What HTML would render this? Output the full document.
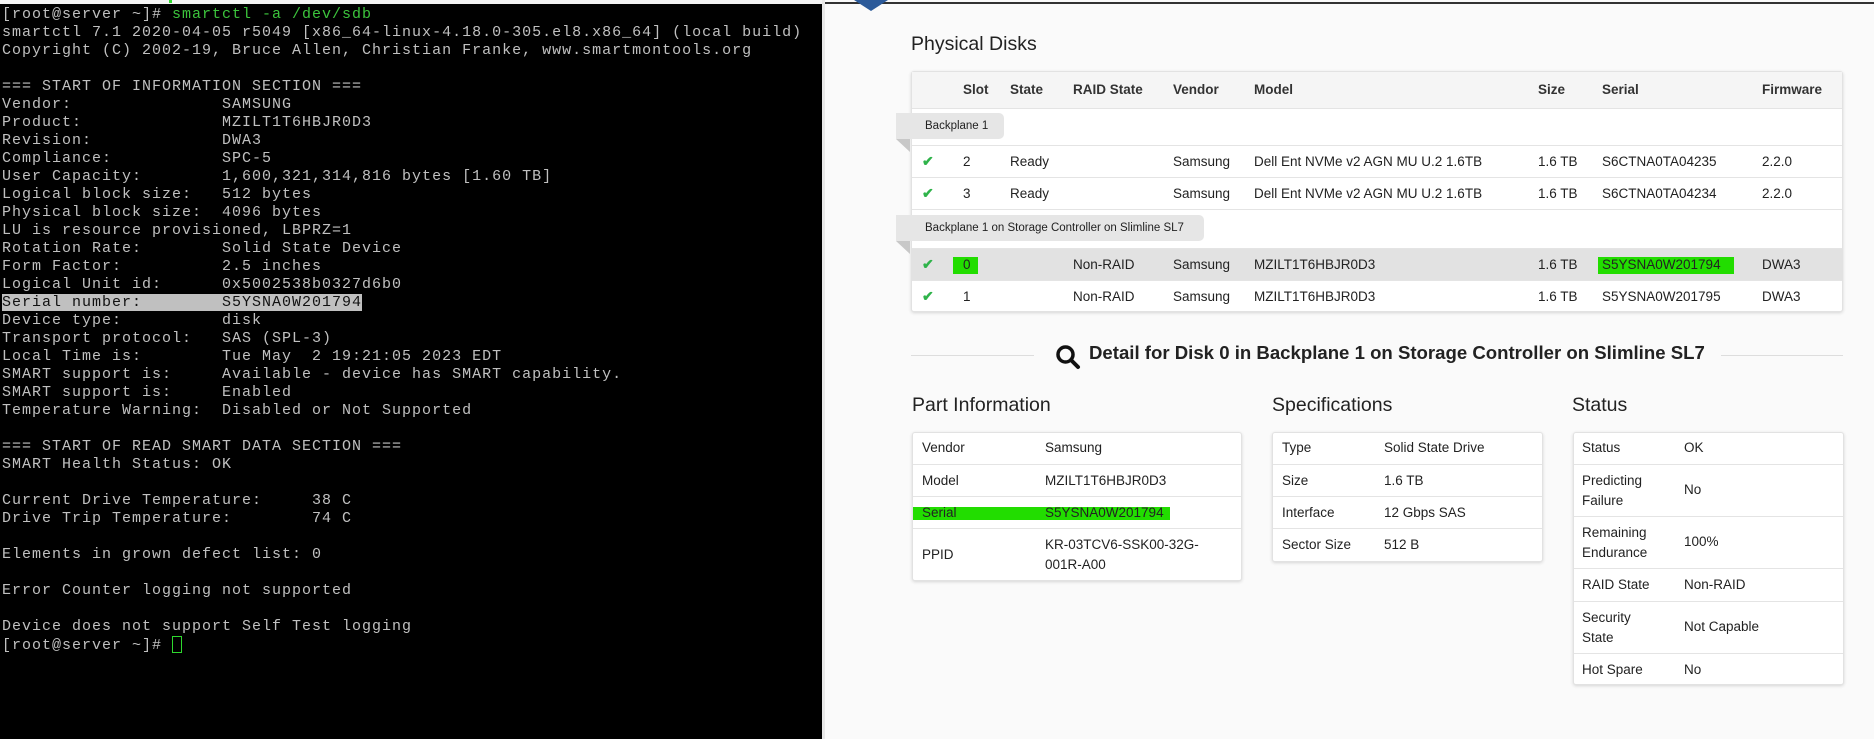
<!DOCTYPE html>
<html><head><meta charset="utf-8"><style>
*{margin:0;padding:0;box-sizing:border-box}
body{width:1874px;height:739px;overflow:hidden;background:#fafafa;position:relative;font-family:"Liberation Sans",sans-serif;color:#222}
#term{position:absolute;left:0;top:4px;width:822px;height:735px;background:#000}
#termtop{position:absolute;left:0;top:0;width:822px;height:4px;background:#f4f4f4}
#sep{position:absolute;left:822px;top:0;width:3px;height:739px;background:#e8e8e8}
pre{position:absolute;left:2px;top:6px;font-family:"Liberation Mono",monospace;font-size:15px;letter-spacing:1px;line-height:18px;color:#c0c0c0}
.g{color:#3cc43c}
.hl{background:#c0c0c0;color:#111}
.cur{display:inline-block;width:10px;height:17px;border:1.5px solid #2ed82e;vertical-align:-4px}
.abs{position:absolute}
h2{position:absolute;font-size:19.5px;font-weight:normal;color:#222}
.box{position:absolute;background:#fff;border:1px solid #e2e2e2;box-shadow:0 1px 3px rgba(0,0,0,.15);border-radius:3px}
.row{position:absolute;left:0;right:0;border-top:1px solid #e4e4e4;font-size:13.5px}
.t{position:absolute;white-space:nowrap}
.badge{position:absolute;left:896px;height:26px;background:#e6e6e6;border-radius:0 5px 5px 0;font-size:11.5px;line-height:26px;padding-left:29px;color:#222}
.fold{position:absolute;left:896px;width:0;height:0;border-top:13px solid #c8c8c8;border-left:14px solid transparent}
.ck{position:absolute;color:#2fb34a;font-weight:bold;font-size:14px}
.green{position:absolute;background:#22dd00}
</style></head><body>
<div id="termtop"></div>
<div id="term"></div>
<div class="abs" style="left:169px;top:0;width:3px;height:3px;background:#2ed82e"></div>
<pre>[root@server ~]# <span class="g">smartctl -a /dev/sdb</span>
smartctl 7.1 2020-04-05 r5049 [x86_64-linux-4.18.0-305.el8.x86_64] (local build)
Copyright (C) 2002-19, Bruce Allen, Christian Franke, www.smartmontools.org

=== START OF INFORMATION SECTION ===
Vendor:               SAMSUNG
Product:              MZILT1T6HBJR0D3
Revision:             DWA3
Compliance:           SPC-5
User Capacity:        1,600,321,314,816 bytes [1.60 TB]
Logical block size:   512 bytes
Physical block size:  4096 bytes
LU is resource provisioned, LBPRZ=1
Rotation Rate:        Solid State Device
Form Factor:          2.5 inches
Logical Unit id:      0x5002538b0327d6b0
<span class="hl">Serial number:        S5YSNA0W201794</span>
Device type:          disk
Transport protocol:   SAS (SPL-3)
Local Time is:        Tue May  2 19:21:05 2023 EDT
SMART support is:     Available - device has SMART capability.
SMART support is:     Enabled
Temperature Warning:  Disabled or Not Supported

=== START OF READ SMART DATA SECTION ===
SMART Health Status: OK

Current Drive Temperature:     38 C
Drive Trip Temperature:        74 C

Elements in grown defect list: 0

Error Counter logging not supported

Device does not support Self Test logging
[root@server ~]# <span class="cur"></span></pre>
<div id="sep"></div>
<div class="abs" style="left:825px;top:2px;width:1049px;height:2px;background:#333"></div>
<div class="abs" style="left:854px;top:0;width:0;height:0;border-left:17px solid transparent;border-right:17px solid transparent;border-top:11px solid #2b5a9a"></div>

<h2 style="left:911px;top:33px">Physical Disks</h2>
<div class="box" style="left:911px;top:71px;width:932px;height:241px">
 <div class="row" style="top:0;height:36px;background:#f5f5f5;border-top:none;font-weight:bold;color:#333">
  <span class="t" style="left:51px;top:10px">Slot</span><span class="t" style="left:98px;top:10px">State</span><span class="t" style="left:161px;top:10px">RAID State</span><span class="t" style="left:261px;top:10px">Vendor</span><span class="t" style="left:342px;top:10px">Model</span><span class="t" style="left:626px;top:10px">Size</span><span class="t" style="left:690px;top:10px">Serial</span><span class="t" style="left:850px;top:10px">Firmware</span>
 </div>
 <div class="row" style="top:36px;height:37px"></div>
 <div class="row" style="top:73px;height:32px"><span class="ck" style="left:10px;top:7px">✔</span><span class="t" style="left:51px;top:8px">2</span><span class="t" style="left:98px;top:8px">Ready</span><span class="t" style="left:261px;top:8px">Samsung</span><span class="t" style="left:342px;top:8px">Dell Ent NVMe v2 AGN MU U.2 1.6TB</span><span class="t" style="left:626px;top:8px">1.6 TB</span><span class="t" style="left:690px;top:8px">S6CTNA0TA04235</span><span class="t" style="left:850px;top:8px">2.2.0</span></div>
 <div class="row" style="top:105px;height:32px"><span class="ck" style="left:10px;top:7px">✔</span><span class="t" style="left:51px;top:8px">3</span><span class="t" style="left:98px;top:8px">Ready</span><span class="t" style="left:261px;top:8px">Samsung</span><span class="t" style="left:342px;top:8px">Dell Ent NVMe v2 AGN MU U.2 1.6TB</span><span class="t" style="left:626px;top:8px">1.6 TB</span><span class="t" style="left:690px;top:8px">S6CTNA0TA04234</span><span class="t" style="left:850px;top:8px">2.2.0</span></div>
 <div class="row" style="top:137px;height:39px"></div>
 <div class="row" style="top:176px;height:32px;background:#e2e2e2"><span class="green" style="left:41px;top:8px;width:25px;height:17px"></span><span class="green" style="left:686px;top:8px;width:136px;height:17px"></span><span class="ck" style="left:10px;top:7px">✔</span><span class="t" style="left:51px;top:8px">0</span><span class="t" style="left:161px;top:8px">Non-RAID</span><span class="t" style="left:261px;top:8px">Samsung</span><span class="t" style="left:342px;top:8px">MZILT1T6HBJR0D3</span><span class="t" style="left:626px;top:8px">1.6 TB</span><span class="t" style="left:690px;top:8px">S5YSNA0W201794</span><span class="t" style="left:850px;top:8px">DWA3</span></div>
 <div class="row" style="top:208px;height:32px"><span class="ck" style="left:10px;top:7px">✔</span><span class="t" style="left:51px;top:8px">1</span><span class="t" style="left:161px;top:8px">Non-RAID</span><span class="t" style="left:261px;top:8px">Samsung</span><span class="t" style="left:342px;top:8px">MZILT1T6HBJR0D3</span><span class="t" style="left:626px;top:8px">1.6 TB</span><span class="t" style="left:690px;top:8px">S5YSNA0W201795</span><span class="t" style="left:850px;top:8px">DWA3</span></div>
</div>
<div class="badge" style="top:113px;width:108px">Backplane 1</div>
<div class="fold" style="top:139px"></div>
<div class="badge" style="top:215px;width:308px">Backplane 1 on Storage Controller on Slimline SL7</div>
<div class="fold" style="top:241px"></div>

<div class="abs" style="left:911px;top:355px;width:123px;height:1px;background:#ddd"></div>
<div class="abs" style="left:1721px;top:355px;width:122px;height:1px;background:#ddd"></div>
<svg class="abs" style="left:1055px;top:344px" width="26" height="26" viewBox="0 0 26 26"><circle cx="10.5" cy="10.5" r="7.5" fill="none" stroke="#111" stroke-width="3.5"/><line x1="16" y1="16" x2="23" y2="23" stroke="#111" stroke-width="4" stroke-linecap="round"/></svg>
<div class="abs" style="left:1089px;top:342px;font-size:18.6px;font-weight:bold;color:#222;white-space:nowrap">Detail for Disk 0 in Backplane 1 on Storage Controller on Slimline SL7</div>

<h2 style="left:912px;top:394px">Part Information</h2>
<h2 style="left:1272px;top:394px">Specifications</h2>
<h2 style="left:1572px;top:394px">Status</h2>

<div class="box" style="left:912px;top:432px;width:330px;height:149px">
 <div class="row" style="top:0;height:31px;border-top:none"><span class="t" style="left:9px;top:7px">Vendor</span><span class="t" style="left:132px;top:7px">Samsung</span></div>
 <div class="row" style="top:31px;height:32px"><span class="t" style="left:9px;top:8px">Model</span><span class="t" style="left:132px;top:8px">MZILT1T6HBJR0D3</span></div>
 <div class="row" style="top:63px;height:32px"><span class="green" style="left:0;top:10px;width:257px;height:13px"></span><span class="t" style="left:9px;top:8px">Serial</span><span class="t" style="left:132px;top:8px">S5YSNA0W201794</span></div>
 <div class="row" style="top:95px;height:53px"><span class="t" style="left:9px;top:18px">PPID</span><span class="t" style="left:132px;top:6px;line-height:20px">KR-03TCV6-SSK00-32G-<br>001R-A00</span></div>
</div>

<div class="box" style="left:1272px;top:432px;width:271px;height:130px">
 <div class="row" style="top:0;height:31px;border-top:none"><span class="t" style="left:9px;top:7px">Type</span><span class="t" style="left:111px;top:7px">Solid State Drive</span></div>
 <div class="row" style="top:31px;height:32px"><span class="t" style="left:9px;top:8px">Size</span><span class="t" style="left:111px;top:8px">1.6 TB</span></div>
 <div class="row" style="top:63px;height:32px"><span class="t" style="left:9px;top:8px">Interface</span><span class="t" style="left:111px;top:8px">12 Gbps SAS</span></div>
 <div class="row" style="top:95px;height:34px"><span class="t" style="left:9px;top:8px">Sector Size</span><span class="t" style="left:111px;top:8px">512 B</span></div>
</div>

<div class="box" style="left:1573px;top:432px;width:271px;height:253px">
 <div class="row" style="top:0;height:31px;border-top:none"><span class="t" style="left:8px;top:7px">Status</span><span class="t" style="left:110px;top:7px">OK</span></div>
 <div class="row" style="top:31px;height:52px"><span class="t" style="left:8px;top:6px;line-height:20px">Predicting<br>Failure</span><span class="t" style="left:110px;top:17px">No</span></div>
 <div class="row" style="top:83px;height:52px"><span class="t" style="left:8px;top:6px;line-height:20px">Remaining<br>Endurance</span><span class="t" style="left:110px;top:17px">100%</span></div>
 <div class="row" style="top:135px;height:33px"><span class="t" style="left:8px;top:8px">RAID State</span><span class="t" style="left:110px;top:8px">Non-RAID</span></div>
 <div class="row" style="top:168px;height:52px"><span class="t" style="left:8px;top:6px;line-height:20px">Security<br>State</span><span class="t" style="left:110px;top:17px">Not Capable</span></div>
 <div class="row" style="top:220px;height:32px"><span class="t" style="left:8px;top:8px">Hot Spare</span><span class="t" style="left:110px;top:8px">No</span></div>
</div>
</body></html>
